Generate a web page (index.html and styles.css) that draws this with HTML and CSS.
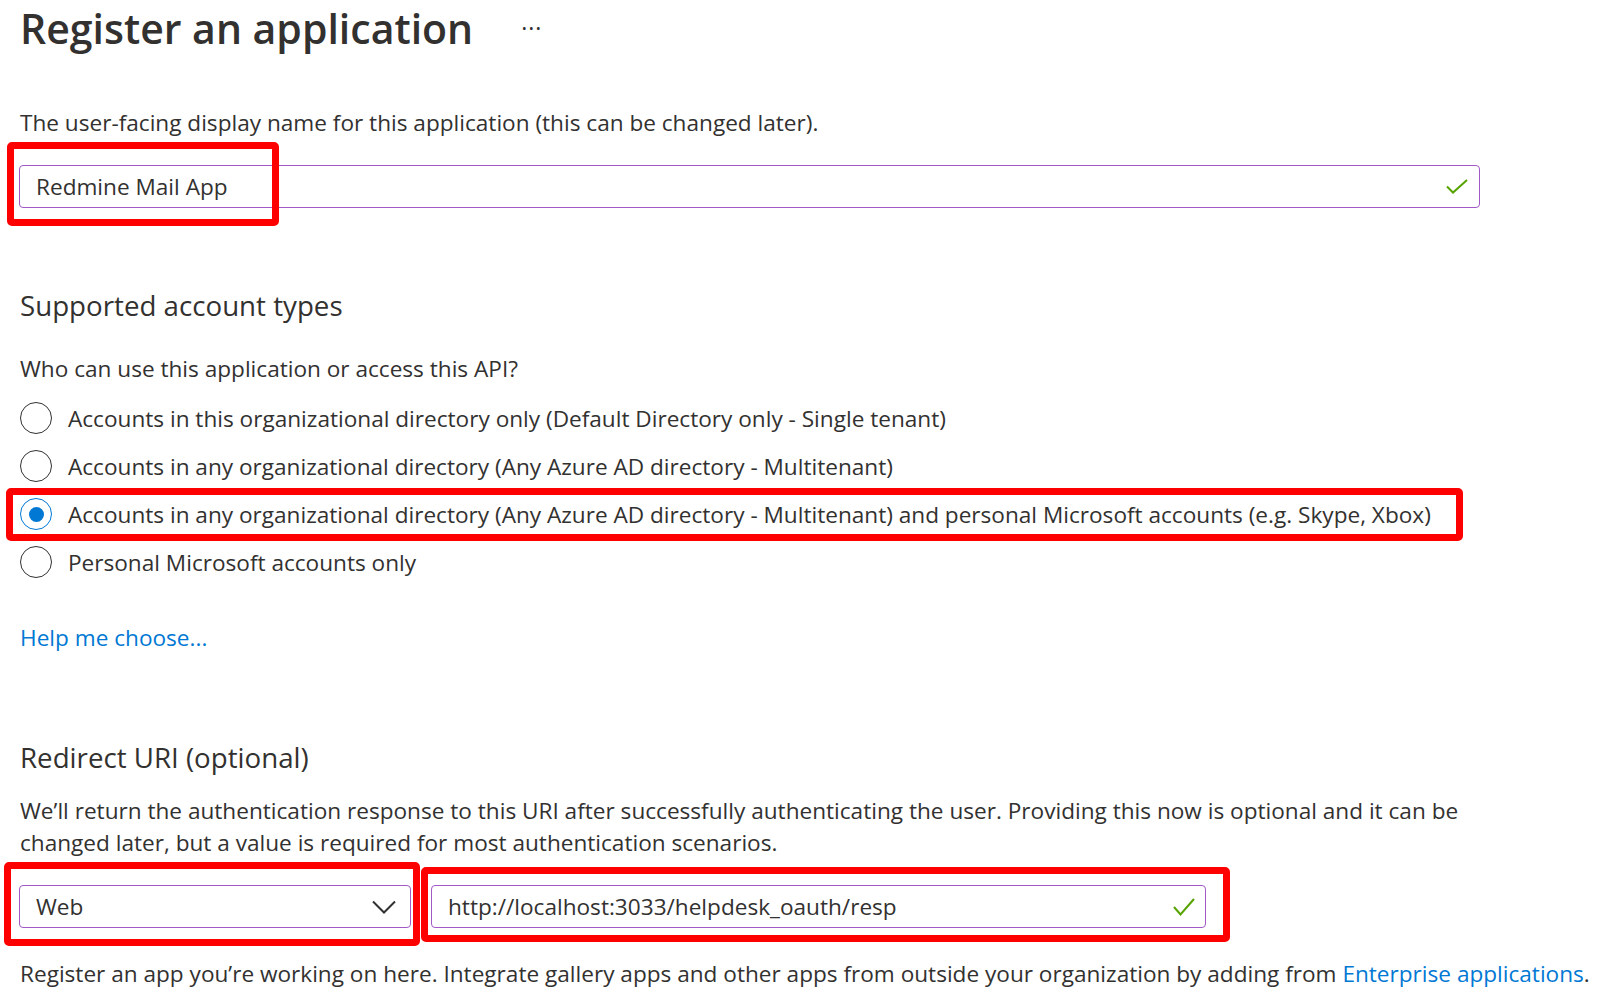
FILE: index.html
```html
<!DOCTYPE html>
<html lang="en">
<head>
  <meta charset="UTF-8">
  <title>Register an application</title>
  <link rel="stylesheet" href="styles.css">
</head>
<body>
  <main class="page">
    <header class="title-bar">
      <h1>Register an application</h1>
      <span class="more">&middot;&middot;&middot;</span>
    </header>

    <p class="hint">The user-facing display name for this application (this can be changed later).</p>
    <div class="field field-name">
      <span class="field-value">Redmine Mail App</span>
      <svg class="check" width="22" height="15" viewBox="0 0 22 15"><polyline points="1,7.5 7,13.5 21,1" fill="none" stroke="#57a300" stroke-width="2"/></svg>
      <span class="mark mark-name"></span>
    </div>

    <h2>Supported account types</h2>
    <p class="question">Who can use this application or access this API?</p>
    <div class="radio-list">
      <label class="radio-row">
        <span class="radio"></span>
        <span>Accounts in this organizational directory only (Default Directory only - Single tenant)</span>
      </label>
      <label class="radio-row">
        <span class="radio"></span>
        <span>Accounts in any organizational directory (Any Azure AD directory - Multitenant)</span>
      </label>
      <label class="radio-row">
        <span class="radio checked"></span>
        <span>Accounts in any organizational directory (Any Azure AD directory - Multitenant) and personal Microsoft accounts (e.g. Skype, Xbox)</span>
        <span class="mark mark-radio"></span>
      </label>
      <label class="radio-row">
        <span class="radio"></span>
        <span>Personal Microsoft accounts only</span>
      </label>
    </div>

    <a class="link help-link" href="#">Help me choose...</a>

    <h2 class="redirect-title">Redirect URI (optional)</h2>
    <p class="redirect-text">We’ll return the authentication response to this URI after successfully authenticating the user. Providing this now is optional and it can be changed later, but a value is required for most authentication scenarios.</p>

    <div class="redirect-fields">
      <div class="field field-platform">
        <span class="field-value">Web</span>
        <svg class="chevron" width="24" height="14" viewBox="0 0 24 14"><polyline points="1,1.5 12,12.5 23,1.5" fill="none" stroke="#323130" stroke-width="2"/></svg>
        <span class="mark mark-platform"></span>
      </div>
      <div class="field field-url">
        <span class="field-value">http://localhost:3033/helpdesk_oauth/resp</span>
        <svg class="check" width="22" height="18" viewBox="0 0 22 18"><polyline points="1,9 7.5,16.5 21,1" fill="none" stroke="#57a300" stroke-width="2"/></svg>
        <span class="mark mark-url"></span>
      </div>
    </div>

    <p class="footer-note">Register an app you’re working on here. Integrate gallery apps and other apps from outside your organization by adding from <a class="link" href="#">Enterprise applications</a>.</p>
  </main>
</body>
</html>
```

FILE: styles.css
```css
/* Azure portal style, zoomed screenshot */
body {
  margin: 0;
  background: #fff;
  color: #323130;
  font-family: 'Open Sans', 'Noto Sans', sans-serif;
  font-size: 22.6px;
}

.page {
  padding: 0 19px;
}

.title-bar {
  display: flex;
  align-items: center;
  gap: 48px;
  height: 56px;
}

h1 {
  margin: 0;
  font-size: 41px;
  font-weight: 600;
  line-height: 56px;
  padding-left: 1px;
}

.more {
  font-size: 23px;
  line-height: 44px;
  letter-spacing: 1px;
}

p {
  margin: 0;
  line-height: 30px;
}

.hint {
  margin-top: 52px;
  padding-left: 1px;
}

h2 {
  margin: 80px 0 0;
  font-size: 27.7px;
  font-weight: 400;
  line-height: 34px;
  padding-left: 1px;
}

.question {
  margin-top: 32px;
  padding-left: 1px;
}

/* fields */
.field {
  position: relative;
  display: flex;
  align-items: center;
  justify-content: space-between;
  height: 43px;
  box-sizing: border-box;
  border: 1.5px solid #a259c6;
  border-radius: 4px;
  padding: 0 14px 0 16px;
}

.field-name {
  margin-top: 27px;
  width: 1461px;
  padding-right: 11px;
}

.redirect-fields {
  display: flex;
  gap: 20px;
  margin-top: 26px;
}

.field-platform {
  width: 392px;
  padding-right: 14px;
}

.field-url {
  width: 775px;
  padding-right: 10px;
}

/* red annotation boxes */
.mark {
  position: absolute;
  box-sizing: border-box;
  border: 7px solid #ff0000;
  border-radius: 5px;
  pointer-events: none;
}

.mark-name {
  left: -13px;
  top: -24px;
  width: 272px;
  height: 84px;
}

.mark-platform {
  left: -16px;
  top: -24px;
  width: 416px;
  height: 84px;
}

.mark-url {
  left: -11px;
  top: -19px;
  width: 809px;
  height: 75px;
}

.mark-radio {
  left: -13px;
  top: -2px;
  width: 1457px;
  height: 53px;
}

/* radios */
.radio-list {
  margin-top: 10px;
}

.radio-row {
  position: relative;
  display: flex;
  align-items: center;
  gap: 16px;
  height: 48px;
  padding-left: 1px;
}

.radio {
  width: 32px;
  height: 32px;
  box-sizing: border-box;
  border: 1.5px solid #323130;
  border-radius: 50%;
  flex-shrink: 0;
  display: flex;
  align-items: center;
  justify-content: center;
}

.radio.checked {
  border-color: #0078d4;
}

.radio.checked::after {
  content: "";
  width: 15px;
  height: 15px;
  border-radius: 50%;
  background: #0078d4;
}

.link {
  color: #0078d4;
  text-decoration: none;
}

.help-link {
  display: block;
  margin-top: 37px;
  line-height: 30px;
  padding-left: 1px;
}

.redirect-title {
  margin-top: 87px;
}

.redirect-text {
  margin-top: 21px;
  line-height: 32px;
  max-width: 1470px;
  padding-left: 1px;
}

.footer-note {
  margin-top: 31px;
  padding-left: 1px;
  white-space: nowrap;
}
```
